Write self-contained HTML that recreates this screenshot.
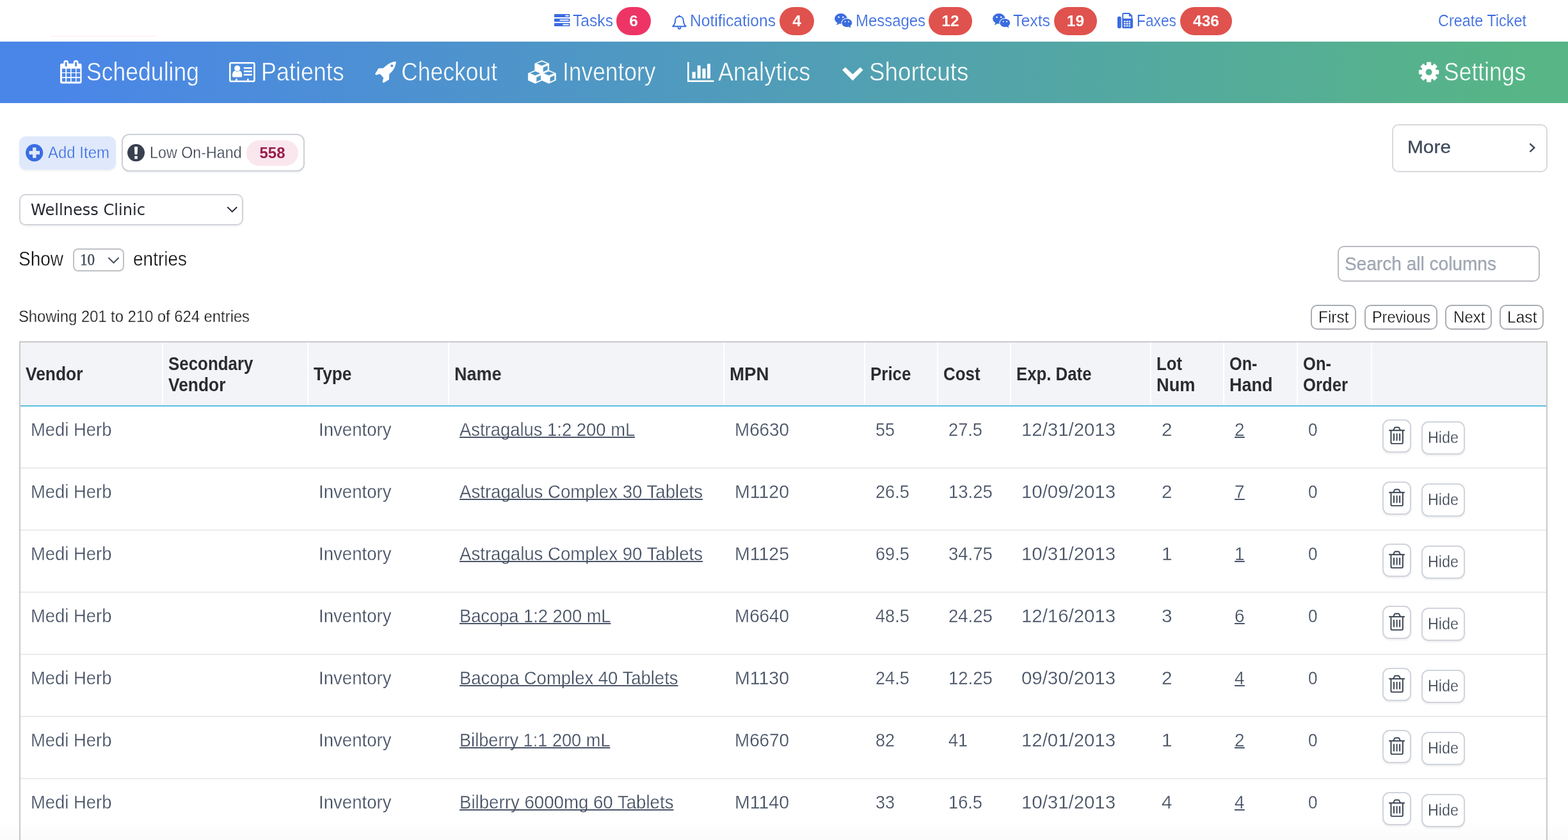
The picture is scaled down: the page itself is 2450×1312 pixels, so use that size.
<!DOCTYPE html>
<html lang="en">
<head>
<meta charset="utf-8">
<title>Inventory</title>
<style>
*{box-sizing:border-box;margin:0;padding:0}
html,body{width:2450px;height:1312px;overflow:hidden;background:#fff}
@media (max-width:1400px){html{zoom:.5}}
body{font-family:"Liberation Sans",sans-serif;color:#111;position:relative}
.page{position:absolute;left:0;top:0;width:2450px;height:1312px;overflow:hidden;will-change:transform}
a{text-decoration:none;color:inherit}
button{font:inherit;color:inherit;background:none;border:0}
svg{display:block;position:absolute;overflow:visible}
.sc{width:17px;height:10px}
.f{display:inline-block;transform-origin:0 50%;white-space:nowrap}
/* top bar */
.top{position:absolute;left:0;top:0;width:2450px;height:65px;background:#fff;color:#3a6be0;font-size:26px;line-height:65px}
.top a{position:absolute;top:0;height:65px}
.top .bd{position:absolute;top:11px;height:44px;border-radius:22px;background:#e0524d;color:#fff;font-weight:bold;font-size:24.5px;line-height:43.4px;text-align:center}
.top .bd.pk{background:#ee3465}
.logo{position:absolute;left:79px;top:56.3px;width:164px;height:1.2px;background:#fbeaf1}
/* nav */
.nav{position:absolute;left:0;top:65px;width:2450px;height:96px;background:linear-gradient(90deg,#4a86e8 4%,#57b586 97%);color:#fff;font-size:40.2px;line-height:96px}
.nav a{position:absolute;top:0;height:96px}
.nav .f{position:relative;top:0}
/* action row */
.btn-add{position:absolute;left:30px;top:213px;width:151px;height:52px;border-radius:10px;background:#dfe9fb;color:#3a6de2;font-size:25.8px;line-height:52px;box-shadow:0 2px 3px rgba(0,0,0,.06)}
.btn-low{position:absolute;left:189.5px;top:209.3px;width:286.5px;height:59px;border-radius:12px;border:2px solid #cdd1d8;background:#fff;color:#394150;font-size:25.8px;line-height:55px;box-shadow:0 2px 3px rgba(0,0,0,.06)}
.btn-add .f{position:absolute;top:-0.8px}
.btn-low .f{position:absolute;top:0.2px}
.pill{position:absolute;left:193.5px;top:7.7px;width:81px;height:40px;border-radius:20px;background:#fae7ee;color:#9a1d4b;font-weight:bold;font-size:24px;line-height:40px}
.more{position:absolute;left:2174.5px;top:193.5px;width:243.5px;height:75px;border:2px solid #d6d9dd;border-radius:10px;color:#3e4a5b;font-size:28px;line-height:69px}
.more .f{position:absolute;left:22px;top:-0.5px;-webkit-text-stroke:.3px #3e4a5b}
.sel{position:absolute;left:30px;top:302.9px;width:350px;height:48.8px;border:2px solid #d0d4da;border-radius:10px;font-family:"DejaVu Sans","Liberation Sans",sans-serif;font-size:24.6px;line-height:45.4px;color:#23272f;box-shadow:0 2px 3px rgba(0,0,0,.06)}
.sel .f{position:absolute;left:16.3px;top:0}
.sel .sc{left:322.1px;top:17.2px;width:17.6px;height:10.5px}
.len .sc{left:51.4px;top:10.9px;width:19px;height:11.4px;color:#4b5563}
.show{position:absolute;left:0;top:380px;width:2450px;height:50px;font-size:30.6px;line-height:50px;color:#0b0c0e}
.show .f{position:absolute;top:-0.9px}
.len{position:absolute;left:114.2px;top:7.8px;width:79.6px;height:36px;border:2px solid #bfc1c5;border-radius:8px;font-family:"Liberation Serif",serif;font-size:24.8px;line-height:31px;color:#374151;-webkit-text-stroke:.25px #374151}
.search{position:absolute;left:2090.3px;top:384.4px;width:315.7px;height:55.8px;border:2px solid #b9bcc2;border-radius:10px;font-size:29px;line-height:50.6px;color:#9ca3af}
.search .f{position:absolute;left:8.5px;top:0.6px;-webkit-text-stroke:.25px #9ca3af}
.info{position:absolute;left:29px;top:471.1px;font-size:26px;line-height:46px;color:#0b0c0e}
.pg{position:absolute;top:475.6px;height:39.4px;border:2px solid #a9adb3;border-radius:10px;font-size:25.5px;line-height:35px;color:#0b0c0e}
.pg .f{position:absolute;top:0}
/* table */
table{position:absolute;left:30px;top:533px;width:2388px;border:2px solid #c9c9c9;border-collapse:separate;border-spacing:0;table-layout:fixed}
th{height:100px;background:linear-gradient(#fff,#fff) 0 0/2px 100% no-repeat #f3f4f8;border-bottom:2px solid #5bc0de;padding:1px 0 0 10px;text-align:left;vertical-align:middle;font-weight:bold;font-size:29.4px;line-height:32.8px;color:#2a2c30}
th:first-child{background:#f3f4f8;padding-left:8px}
th .f{display:block;width:max-content}
td{height:97px;border-bottom:2px solid #e9ebed;padding:18.2px 0 0 18px;vertical-align:top;font-size:30px;line-height:36px;color:#444f62;overflow:visible}
td.c1{padding-left:16px}
.lk{position:relative}
.lk::after{content:"";position:absolute;left:0;right:0;top:29.2px;height:1.7px;background:#4a5568}
.ab{position:relative;height:0;top:0.8px}
.tb{position:absolute;left:0.3px;top:1.2px;width:44.4px;height:51.4px;border:2px solid #d1d5db;border-radius:11px;background:#fff;box-shadow:0 2px 3px rgba(0,0,0,.07);color:#3a4352}
.hb{position:absolute;left:61.2px;top:4.3px;width:67.6px;height:51.3px;border:2px solid #d1d5db;border-radius:11px;background:#fff;box-shadow:0 2px 3px rgba(0,0,0,.07);color:#3a4352;font-size:25.6px;line-height:48.6px;text-align:left}
.hb .f{position:absolute;left:8px;top:-0.8px}

.top a .f{-webkit-text-stroke:.2px #fff}
.nav .f{-webkit-text-stroke-width:.55px}
td .f{-webkit-text-stroke:.3px #fff}
.btn-add .f{-webkit-text-stroke:.35px #dfe9fb}
.btn-low>.f{-webkit-text-stroke:.35px #fff}
.info .f,.pg .f{-webkit-text-stroke:.35px #fff}
.hb .f{-webkit-text-stroke:.3px #fff}
.show>.f{-webkit-text-stroke:.4px #fff}
.fade{position:absolute;left:0;top:1282px;width:2450px;height:30px;background:linear-gradient(rgba(0,0,0,0),rgba(0,0,0,.014));pointer-events:none}
</style>
</head>
<body>
<div class="page">
<header class="top">
<div class="logo"></div>
<a style="left:865.6px"><svg viewBox="98 143 249 194" style="left:0px;top:22px;width:24.4px;height:19.0px" aria-hidden="true"><g fill="currentColor"><rect x="98" y="143" width="249" height="52" rx="7"/><rect x="98" y="214" width="249" height="52" rx="7"/><rect x="98" y="285" width="249" height="52" rx="7"/></g><g fill="#fff"><rect x="275" y="160" width="55" height="20"/><rect x="185" y="230" width="145" height="20"/><rect x="235" y="302" width="95" height="20"/></g></svg><span class="f" style="margin-left:29px;transform:scaleX(0.9478)">Tasks</span></a><span class="bd pk" style="left:963px;width:54px">6</span>
<a style="left:1050px"><svg viewBox="1981 150 224 218" style="left:-0.5px;top:22.5px;width:23.0px;height:22.3px" aria-hidden="true"><g fill="none" stroke="currentColor" stroke-width="19" stroke-linejoin="round" stroke-linecap="round"><path d="M1992 328 C2022 300 2030 275 2030 238 C2030 200 2056 176 2092 176 C2128 176 2155 200 2155 238 C2155 275 2163 300 2193 328 Z"/><path d="M2074 346 a19 19 0 0 0 38 0"/></g><circle cx="2092" cy="166" r="12" fill="currentColor"/></svg><span class="f" style="margin-left:28px;transform:scaleX(0.9462)">Notifications</span></a><span class="bd" style="left:1218px;width:54px">4</span>
<a style="left:1303.8px"><svg viewBox="80 132 285 233" style="left:0px;top:20.9px;width:27.9px;height:22.8px" aria-hidden="true"><g fill="currentColor"><ellipse cx="180" cy="215" rx="100" ry="83"/><path d="M125 280 L108 318 L165 294 Z"/></g><ellipse cx="277" cy="283" rx="92" ry="76" fill="#fff"/><g fill="currentColor"><ellipse cx="277" cy="283" rx="82" ry="66"/><path d="M305 338 L336 366 L332 328 Z"/></g><g fill="#fff"><circle cx="147" cy="190" r="13"/><circle cx="215" cy="190" r="13"/><circle cx="250" cy="262" r="11"/><circle cx="305" cy="262" r="11"/></g></svg><span class="f" style="margin-left:33px;transform:scaleX(0.9198)">Messages</span></a><span class="bd" style="left:1451px;width:68px">12</span>
<a style="left:1550.8px"><svg viewBox="80 132 285 233" style="left:0px;top:20.9px;width:27.9px;height:22.8px" aria-hidden="true"><g fill="currentColor"><ellipse cx="180" cy="215" rx="100" ry="83"/><path d="M125 280 L108 318 L165 294 Z"/></g><ellipse cx="277" cy="283" rx="92" ry="76" fill="#fff"/><g fill="currentColor"><ellipse cx="277" cy="283" rx="82" ry="66"/><path d="M305 338 L336 366 L332 328 Z"/></g><g fill="#fff"><circle cx="147" cy="190" r="13"/><circle cx="215" cy="190" r="13"/><circle cx="250" cy="262" r="11"/><circle cx="305" cy="262" r="11"/></g></svg><span class="f" style="margin-left:32px;transform:scaleX(0.9557)">Texts</span></a><span class="bd" style="left:1647px;width:67px">19</span>
<a style="left:1745.8px"><svg viewBox="100 122 247 248" style="left:0px;top:20.0px;width:24.2px;height:24.3px" aria-hidden="true"><g fill="currentColor"><rect x="100" y="180" width="60" height="190" rx="24"/><rect x="175" y="205" width="172" height="165" rx="26"/><path d="M175 230 V145 Q175 122 198 122 H292 L338 168 V230 Z"/></g><path d="M195 215 V142 H283 V178 H318 V215 Z" fill="#fff"/><g fill="#fff"><rect x="203" y="250" width="26" height="22"/><rect x="241" y="250" width="26" height="22"/><rect x="279" y="250" width="26" height="22"/><rect x="203" y="285" width="26" height="22"/><rect x="241" y="285" width="26" height="22"/><rect x="279" y="285" width="26" height="22"/><rect x="203" y="320" width="26" height="22"/><rect x="241" y="320" width="26" height="22"/><rect x="279" y="320" width="26" height="22"/></g></svg><span class="f" style="margin-left:30px;transform:scaleX(0.8756)">Faxes</span></a><span class="bd" style="left:1844px;width:81px">436</span>
<a style="left:2247px"><span class="f" style="transform:scaleX(0.9009)">Create Ticket</span></a>
</header>
<nav class="nav">
<a style="left:93.8px"><svg viewBox="150 150 515 558" style="left:0px;top:28.8px;width:33.6px;height:36.4px" aria-hidden="true"><path fill="currentColor" fill-rule="evenodd" d="M185 232H630Q665 232 665 267V673Q665 708 630 708H185Q150 708 150 673V267Q150 232 185 232ZM268 232V300H312V232Z M505 232V300H549V232ZM195 355H277V440H195ZM195 462H277V552H195ZM195 580H277V665H195ZM305 355H395V440H305ZM305 462H395V552H305ZM305 580H395V665H305ZM420 355H520V440H420ZM420 462H520V552H420ZM420 580H520V665H420ZM542 355H630V440H542ZM542 462H630V552H542ZM542 580H630V665H542Z"/><path fill="currentColor" fill-rule="evenodd" d="M290 150Q350 150 350 210V240H230V210Q230 150 290 150ZM290 193Q268 193 268 215V240H312V215Q312 193 290 193ZM527 150Q587 150 587 210V240H467V210Q467 150 527 150ZM527 193Q505 193 505 215V240H549V215Q549 193 527 193Z"/></svg><span class="f" style="margin-left:41.5px;-webkit-text-stroke-color:#4b89e3;transform:scaleX(0.8850)">Scheduling</span></a>
<a style="left:358.1px"><svg viewBox="155 190 625 480" style="left:0px;top:31.9px;width:40.8px;height:31.3px" aria-hidden="true"><rect x="175" y="210" width="585" height="440" rx="32" fill="none" stroke="currentColor" stroke-width="40"/><g fill="currentColor"><circle cx="350" cy="340" r="70"/><path d="M232 505C232 440 262 400 300 398C330 425 370 425 400 398C438 400 466 440 466 505V522Q466 552 436 552H262Q232 552 232 522Z"/><rect x="505" y="312" width="200" height="40" rx="6"/><rect x="505" y="393" width="200" height="40" rx="6"/><rect x="505" y="472" width="200" height="40" rx="6"/><rect x="310" y="588" width="40" height="45"/><rect x="585" y="588" width="40" height="45"/></g></svg><span class="f" style="margin-left:49.5px;-webkit-text-stroke-color:#4c8ed8;transform:scaleX(0.8938)">Patients</span></a>
<a style="left:585.8px"><svg viewBox="150 190 505 512" style="left:0px;top:31.4px;width:33.0px;height:33.4px" aria-hidden="true"><path fill="currentColor" fill-rule="evenodd" d="M652 190C560 196 468 236 345 352L232 356L150 490Q158 515 185 512L268 490L352 580L326 682Q335 702 358 698L486 622L490 495C600 400 648 300 652 190ZM553 262a31 31 0 1 0 0.1 0Z"/></svg><span class="f" style="margin-left:40.8px;-webkit-text-stroke-color:#4d92ce;transform:scaleX(0.8835)">Checkout</span></a>
<a style="left:824.8px"><svg viewBox="165 150 670 560" style="left:0px;top:28.8px;width:43.8px;height:36.6px" aria-hidden="true"><path fill="currentColor" fill-rule="evenodd" stroke="currentColor" stroke-width="4" stroke-linejoin="round" d="M497 155L669 230L669 395L497 470L325 395L325 230ZM497 181L624 232L497 283L370 232ZM526 325L635 278L635 382L526 429Z"/><path fill="currentColor" fill-rule="evenodd" stroke="currentColor" stroke-width="4" stroke-linejoin="round" d="M337 388L507 463L507 633L337 708L167 633L167 463ZM337 414L463 465L337 516L211 465ZM366 559L473 512L473 619L366 666Z"/><path fill="currentColor" fill-rule="evenodd" stroke="currentColor" stroke-width="4" stroke-linejoin="round" d="M663 388L833 463L833 633L663 708L493 633L493 463ZM663 414L789 465L663 516L537 465ZM692 559L799 512L799 619L692 666Z"/></svg><span class="f" style="margin-left:54.0px;-webkit-text-stroke-color:#4f98c3;transform:scaleX(0.8802)">Inventory</span></a>
<a style="left:1073.5px"><svg viewBox="145 195 635 475" style="left:0px;top:31.7px;width:41.5px;height:31.0px" aria-hidden="true"><g fill="currentColor"><rect x="145" y="195" width="40" height="475"/><rect x="145" y="630" width="635" height="40"/><rect x="260" y="430" width="80" height="155"/><rect x="385" y="275" width="76" height="310"/><rect x="503" y="350" width="78" height="235"/><rect x="620" y="235" width="76" height="350"/></g></svg><span class="f" style="margin-left:48.4px;-webkit-text-stroke-color:#509db9;transform:scaleX(0.8967)">Analytics</span></a>
<a style="left:1316.1px"><svg viewBox="155 320 500 320" style="left:0px;top:39.9px;width:32.7px;height:20.9px" aria-hidden="true"><path fill="currentColor" d="M155 385L230 320L405 490L585 320L655 385L405 640Z"/></svg><span class="f" style="margin-left:42.2px;-webkit-text-stroke-color:#52a2ae;transform:scaleX(0.9148)">Shortcuts</span></a>
<a style="left:2217px"><svg viewBox="168 190 477 480" style="left:0px;top:31.799999999999997px;width:31.2px;height:31.3px" aria-hidden="true"><path fill="currentColor" fill-rule="evenodd" stroke="currentColor" stroke-width="10" stroke-linejoin="round" d="M358 261L359 195L455 195L456 261L474 267L492 276L539 230L607 298L561 345L570 363L576 381L642 382L642 478L576 479L570 497L561 515L607 562L539 630L492 584L474 593L456 599L455 665L359 665L358 599L340 593L322 584L275 630L207 562L253 515L244 497L238 479L172 478L172 382L238 381L244 363L253 345L207 298L275 230L322 276L340 267ZM407 350a80 80 0 1 0 0.1 0Z"/></svg><span class="f" style="margin-left:39.3px;-webkit-text-stroke-color:#57b488;transform:scaleX(0.8835)">Settings</span></a>
</nav>
<main>
<button class="btn-add"><svg viewBox="203 255 280 278" style="left:9.9px;top:12px;width:27.4px;height:27.2px" aria-hidden="true"><circle cx="343" cy="394" r="139" fill="currentColor"/><path fill="#dfe9fb" d="M316 312h56v54h56v56h-56v56h-56v-56h-56v-56h56z"/></svg><span class="f" style="left:45px;transform:scaleX(0.9298)">Add Item</span></button>
<button class="btn-low"><svg viewBox="1827 255 276 278" style="left:7.5px;top:13.7px;width:27.1px;height:27.2px" aria-hidden="true"><circle cx="1965" cy="394" r="138" fill="currentColor"/><path fill="#fff" d="M1938 298H1992L1986 422H1944ZM1942 446H1988V492H1942Z"/></svg><span class="f" style="left:42px;transform:scaleX(0.9028)">Low On-Hand</span><span class="pill">558</span></button>
<div class="more"><span class="f" style="transform:scaleX(1.0659)">More</span><svg viewBox="0 0 14 20" style="left:211.7px;top:26.0px;width:12.3px;height:17.6px" aria-hidden="true"><path d="M2.8 2.8L10.6 10L2.8 17.2" fill="none" stroke="currentColor" stroke-width="2.7"/></svg></div>
<div class="sel"><span class="f" style="transform:scaleX(0.9802)">Wellness Clinic</span><svg class="sc" viewBox="0 0 20 12" aria-hidden="true"><path d="M1.5 1.5L10 10L18.5 1.5" fill="none" stroke="currentColor" stroke-width="2.2"/></svg></div>
<div class="show"><span class="f" style="left:29px;transform:scaleX(0.9147)">Show</span><div class="len"><span class="f" style="position:absolute;left:8.5px;top:0.6px;transform:scaleX(0.9356)">10</span><svg class="sc" viewBox="0 0 20 12" aria-hidden="true"><path d="M1.5 1.5L10 10L18.5 1.5" fill="none" stroke="currentColor" stroke-width="2.2"/></svg></div><span class="f" style="left:208px;transform:scaleX(0.9148)">entries</span></div>
<div class="search"><span class="f" style="transform:scaleX(0.9673)">Search all columns</span></div>
<div class="info"><span class="f" style="transform:scaleX(0.9148)">Showing 201 to 210 of 624 entries</span></div>
<button class="pg" style="left:2048.3px;width:70.8px"><span class="f" style="left:10px;transform:scaleX(0.9581)">First</span></button>
<button class="pg" style="left:2131.5px;width:114.4px"><span class="f" style="left:10.5px;transform:scaleX(0.9172)">Previous</span></button>
<button class="pg" style="left:2258.4px;width:72.6px"><span class="f" style="left:10.5px;transform:scaleX(0.9440)">Next</span></button>
<button class="pg" style="left:2343.1px;width:68.9px"><span class="f" style="left:10px;transform:scaleX(0.9647)">Last</span></button>
<table>
<colgroup><col style="width:221px"><col style="width:227px"><col style="width:220px"><col style="width:430px"><col style="width:220px"><col style="width:114px"><col style="width:114px"><col style="width:219px"><col style="width:114px"><col style="width:115px"><col style="width:116px"><col style="width:274px"></colgroup>
<thead><tr>
<th><span class="f" style="transform:scaleX(0.8984)">Vendor</span></th>
<th><span class="f" style="transform:scaleX(0.8816)">Secondary</span><span class="f" style="transform:scaleX(0.8984)">Vendor</span></th>
<th><span class="f" style="transform:scaleX(0.8958)">Type</span></th>
<th><span class="f" style="transform:scaleX(0.9180)">Name</span></th>
<th><span class="f" style="transform:scaleX(0.9416)">MPN</span></th>
<th><span class="f" style="transform:scaleX(0.8831)">Price</span></th>
<th><span class="f" style="transform:scaleX(0.8804)">Cost</span></th>
<th><span class="f" style="transform:scaleX(0.8773)">Exp. Date</span></th>
<th><span class="f" style="transform:scaleX(0.8752)">Lot</span><span class="f" style="transform:scaleX(0.9263)">Num</span></th>
<th><span class="f" style="transform:scaleX(0.8595)">On-</span><span class="f" style="transform:scaleX(0.9186)">Hand</span></th>
<th><span class="f" style="transform:scaleX(0.8694)">On-</span><span class="f" style="transform:scaleX(0.8745)">Order</span></th>
<th></th>
</tr></thead>
<tbody>
<tr>
<td class="c1"><span class="f" style="transform:scaleX(0.9141)">Medi Herb</span></td>
<td></td>
<td><span class="f" style="transform:scaleX(0.9197)">Inventory</span></td>
<td><a class="f lk" style="transform:scaleX(0.9136)">Astragalus 1:2 200 mL</a></td>
<td><span class="f" style="transform:scaleX(0.9266)">M6630</span></td>
<td><span class="f" style="transform:scaleX(0.8989)">55</span></td>
<td><span class="f" style="transform:scaleX(0.9077)">27.5</span></td>
<td><span class="f" style="transform:scaleX(0.9790)">12/31/2013</span></td>
<td><span class="f" style="transform:scaleX(0.9888)">2</span></td>
<td><a class="f lk" style="transform:scaleX(0.9288)">2</a></td>
<td><span class="f" style="transform:scaleX(0.8689)">0</span></td>
<td class="act"><div class="ab"><button class="tb" aria-label="Delete"><svg viewBox="290 400 415 435" style="left:6.5px;top:8.9px;width:27.1px;height:28.4px" aria-hidden="true"><g fill="none" stroke="currentColor" stroke-width="30" stroke-linecap="round" stroke-linejoin="round"><path d="M320 497H676"/><path d="M415 490L442 436Q449 423 466 423H530Q547 423 554 436L581 490"/><path d="M358 512V782Q358 812 390 812H608Q640 812 640 782V512"/><path d="M428 580V735M498 580V735M568 580V735"/></g></svg></button><button class="hb"><span class="f" style="transform:scaleX(0.9118)">Hide</span></button></div></td>
</tr>
<tr>
<td class="c1"><span class="f" style="transform:scaleX(0.9141)">Medi Herb</span></td>
<td></td>
<td><span class="f" style="transform:scaleX(0.9197)">Inventory</span></td>
<td><a class="f lk" style="transform:scaleX(0.9201)">Astragalus Complex 30 Tablets</a></td>
<td><span class="f" style="transform:scaleX(0.9496)">M1120</span></td>
<td><span class="f" style="transform:scaleX(0.9034)">26.5</span></td>
<td><span class="f" style="transform:scaleX(0.9157)">13.25</span></td>
<td><span class="f" style="transform:scaleX(0.9790)">10/09/2013</span></td>
<td><span class="f" style="transform:scaleX(0.9888)">2</span></td>
<td><a class="f lk" style="transform:scaleX(0.9288)">7</a></td>
<td><span class="f" style="transform:scaleX(0.8689)">0</span></td>
<td class="act"><div class="ab"><button class="tb" aria-label="Delete"><svg viewBox="290 400 415 435" style="left:6.5px;top:8.9px;width:27.1px;height:28.4px" aria-hidden="true"><g fill="none" stroke="currentColor" stroke-width="30" stroke-linecap="round" stroke-linejoin="round"><path d="M320 497H676"/><path d="M415 490L442 436Q449 423 466 423H530Q547 423 554 436L581 490"/><path d="M358 512V782Q358 812 390 812H608Q640 812 640 782V512"/><path d="M428 580V735M498 580V735M568 580V735"/></g></svg></button><button class="hb"><span class="f" style="transform:scaleX(0.9118)">Hide</span></button></div></td>
</tr>
<tr>
<td class="c1"><span class="f" style="transform:scaleX(0.9141)">Medi Herb</span></td>
<td></td>
<td><span class="f" style="transform:scaleX(0.9197)">Inventory</span></td>
<td><a class="f lk" style="transform:scaleX(0.9201)">Astragalus Complex 90 Tablets</a></td>
<td><span class="f" style="transform:scaleX(0.9496)">M1125</span></td>
<td><span class="f" style="transform:scaleX(0.9034)">69.5</span></td>
<td><span class="f" style="transform:scaleX(0.9157)">34.75</span></td>
<td><span class="f" style="transform:scaleX(0.9790)">10/31/2013</span></td>
<td><span class="f" style="transform:scaleX(0.9888)">1</span></td>
<td><a class="f lk" style="transform:scaleX(0.9288)">1</a></td>
<td><span class="f" style="transform:scaleX(0.8689)">0</span></td>
<td class="act"><div class="ab"><button class="tb" aria-label="Delete"><svg viewBox="290 400 415 435" style="left:6.5px;top:8.9px;width:27.1px;height:28.4px" aria-hidden="true"><g fill="none" stroke="currentColor" stroke-width="30" stroke-linecap="round" stroke-linejoin="round"><path d="M320 497H676"/><path d="M415 490L442 436Q449 423 466 423H530Q547 423 554 436L581 490"/><path d="M358 512V782Q358 812 390 812H608Q640 812 640 782V512"/><path d="M428 580V735M498 580V735M568 580V735"/></g></svg></button><button class="hb"><span class="f" style="transform:scaleX(0.9118)">Hide</span></button></div></td>
</tr>
<tr>
<td class="c1"><span class="f" style="transform:scaleX(0.9141)">Medi Herb</span></td>
<td></td>
<td><span class="f" style="transform:scaleX(0.9197)">Inventory</span></td>
<td><a class="f lk" style="transform:scaleX(0.9090)">Bacopa 1:2 200 mL</a></td>
<td><span class="f" style="transform:scaleX(0.9266)">M6640</span></td>
<td><span class="f" style="transform:scaleX(0.9034)">48.5</span></td>
<td><span class="f" style="transform:scaleX(0.9157)">24.25</span></td>
<td><span class="f" style="transform:scaleX(0.9790)">12/16/2013</span></td>
<td><span class="f" style="transform:scaleX(0.9888)">3</span></td>
<td><a class="f lk" style="transform:scaleX(0.9288)">6</a></td>
<td><span class="f" style="transform:scaleX(0.8689)">0</span></td>
<td class="act"><div class="ab"><button class="tb" aria-label="Delete"><svg viewBox="290 400 415 435" style="left:6.5px;top:8.9px;width:27.1px;height:28.4px" aria-hidden="true"><g fill="none" stroke="currentColor" stroke-width="30" stroke-linecap="round" stroke-linejoin="round"><path d="M320 497H676"/><path d="M415 490L442 436Q449 423 466 423H530Q547 423 554 436L581 490"/><path d="M358 512V782Q358 812 390 812H608Q640 812 640 782V512"/><path d="M428 580V735M498 580V735M568 580V735"/></g></svg></button><button class="hb"><span class="f" style="transform:scaleX(0.9118)">Hide</span></button></div></td>
</tr>
<tr>
<td class="c1"><span class="f" style="transform:scaleX(0.9141)">Medi Herb</span></td>
<td></td>
<td><span class="f" style="transform:scaleX(0.9197)">Inventory</span></td>
<td><a class="f lk" style="transform:scaleX(0.9155)">Bacopa Complex 40 Tablets</a></td>
<td><span class="f" style="transform:scaleX(0.9496)">M1130</span></td>
<td><span class="f" style="transform:scaleX(0.9034)">24.5</span></td>
<td><span class="f" style="transform:scaleX(0.9157)">12.25</span></td>
<td><span class="f" style="transform:scaleX(0.9790)">09/30/2013</span></td>
<td><span class="f" style="transform:scaleX(0.9888)">2</span></td>
<td><a class="f lk" style="transform:scaleX(0.9288)">4</a></td>
<td><span class="f" style="transform:scaleX(0.8689)">0</span></td>
<td class="act"><div class="ab"><button class="tb" aria-label="Delete"><svg viewBox="290 400 415 435" style="left:6.5px;top:8.9px;width:27.1px;height:28.4px" aria-hidden="true"><g fill="none" stroke="currentColor" stroke-width="30" stroke-linecap="round" stroke-linejoin="round"><path d="M320 497H676"/><path d="M415 490L442 436Q449 423 466 423H530Q547 423 554 436L581 490"/><path d="M358 512V782Q358 812 390 812H608Q640 812 640 782V512"/><path d="M428 580V735M498 580V735M568 580V735"/></g></svg></button><button class="hb"><span class="f" style="transform:scaleX(0.9118)">Hide</span></button></div></td>
</tr>
<tr>
<td class="c1"><span class="f" style="transform:scaleX(0.9141)">Medi Herb</span></td>
<td></td>
<td><span class="f" style="transform:scaleX(0.9197)">Inventory</span></td>
<td><a class="f lk" style="transform:scaleX(0.9053)">Bilberry 1:1 200 mL</a></td>
<td><span class="f" style="transform:scaleX(0.9266)">M6670</span></td>
<td><span class="f" style="transform:scaleX(0.8989)">82</span></td>
<td><span class="f" style="transform:scaleX(0.8989)">41</span></td>
<td><span class="f" style="transform:scaleX(0.9790)">12/01/2013</span></td>
<td><span class="f" style="transform:scaleX(0.9888)">1</span></td>
<td><a class="f lk" style="transform:scaleX(0.9288)">2</a></td>
<td><span class="f" style="transform:scaleX(0.8689)">0</span></td>
<td class="act"><div class="ab"><button class="tb" aria-label="Delete"><svg viewBox="290 400 415 435" style="left:6.5px;top:8.9px;width:27.1px;height:28.4px" aria-hidden="true"><g fill="none" stroke="currentColor" stroke-width="30" stroke-linecap="round" stroke-linejoin="round"><path d="M320 497H676"/><path d="M415 490L442 436Q449 423 466 423H530Q547 423 554 436L581 490"/><path d="M358 512V782Q358 812 390 812H608Q640 812 640 782V512"/><path d="M428 580V735M498 580V735M568 580V735"/></g></svg></button><button class="hb"><span class="f" style="transform:scaleX(0.9118)">Hide</span></button></div></td>
</tr>
<tr>
<td class="c1"><span class="f" style="transform:scaleX(0.9141)">Medi Herb</span></td>
<td></td>
<td><span class="f" style="transform:scaleX(0.9197)">Inventory</span></td>
<td><a class="f lk" style="transform:scaleX(0.9215)">Bilberry 6000mg 60 Tablets</a></td>
<td><span class="f" style="transform:scaleX(0.9496)">M1140</span></td>
<td><span class="f" style="transform:scaleX(0.8989)">33</span></td>
<td><span class="f" style="transform:scaleX(0.9077)">16.5</span></td>
<td><span class="f" style="transform:scaleX(0.9790)">10/31/2013</span></td>
<td><span class="f" style="transform:scaleX(0.9888)">4</span></td>
<td><a class="f lk" style="transform:scaleX(0.9288)">4</a></td>
<td><span class="f" style="transform:scaleX(0.8689)">0</span></td>
<td class="act"><div class="ab"><button class="tb" aria-label="Delete"><svg viewBox="290 400 415 435" style="left:6.5px;top:8.9px;width:27.1px;height:28.4px" aria-hidden="true"><g fill="none" stroke="currentColor" stroke-width="30" stroke-linecap="round" stroke-linejoin="round"><path d="M320 497H676"/><path d="M415 490L442 436Q449 423 466 423H530Q547 423 554 436L581 490"/><path d="M358 512V782Q358 812 390 812H608Q640 812 640 782V512"/><path d="M428 580V735M498 580V735M568 580V735"/></g></svg></button><button class="hb"><span class="f" style="transform:scaleX(0.9118)">Hide</span></button></div></td>
</tr>
</tbody>
</table>
</main>
<div class="fade"></div>
</div>
</body>
</html>
